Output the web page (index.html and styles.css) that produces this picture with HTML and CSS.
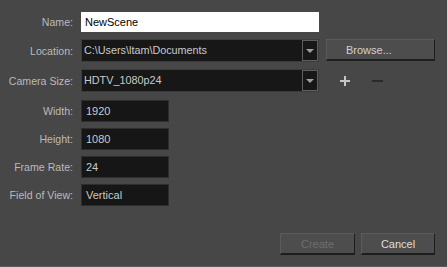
FILE: index.html
```html
<!DOCTYPE html>
<html>
<head>
<meta charset="utf-8">
<link rel="stylesheet" href="styles.css">
</head>
<body>
<div class="dialog">
  <div class="form">
    <div class="row r-name">
      <span class="label">Name:</span>
      <div class="text-input">NewScene</div>
    </div>
    <div class="row r-loc">
      <span class="label">Location:</span>
      <div class="combo">
        <span class="combo-text">C:\Users\ltam\Documents</span>
        <span class="combo-btn"><span class="arrow"></span></span>
      </div>
      <button class="btn btn-browse">Browse...</button>
    </div>
    <div class="row r-cam">
      <span class="label">Camera Size:</span>
      <div class="combo">
        <span class="combo-text">HDTV_1080p24</span>
        <span class="combo-btn"><span class="arrow"></span></span>
      </div>
      <span class="icon-btn plus">
        <svg width="10" height="10" viewBox="0 0 10 10"><rect x="0" y="4" width="10" height="2" fill="#c6c6c6"/><rect x="4" y="0" width="2" height="10" fill="#c6c6c6"/></svg>
      </span>
      <span class="icon-btn minus">
        <svg width="11" height="10" viewBox="0 0 11 10"><rect x="0" y="4" width="11" height="2" fill="#2a2a2a"/></svg>
      </span>
    </div>
    <div class="row r-field first">
      <span class="label">Width:</span>
      <div class="field">1920</div>
    </div>
    <div class="row r-field">
      <span class="label">Height:</span>
      <div class="field">1080</div>
    </div>
    <div class="row r-field">
      <span class="label">Frame Rate:</span>
      <div class="field">24</div>
    </div>
    <div class="row r-field">
      <span class="label">Field of View:</span>
      <div class="field">Vertical</div>
    </div>
  </div>
  <div class="footer">
    <button class="btn btn-create">Create</button>
    <button class="btn btn-cancel">Cancel</button>
  </div>
</div>
</body>
</html>
```

FILE: styles.css
```css
html, body {
  margin: 0;
  padding: 0;
  background: #474747;
}
body {
  width: 447px;
  height: 267px;
  overflow: hidden;
  font-family: "Liberation Sans", Arial, sans-serif;
  font-size: 11px;
}
.dialog {
  box-sizing: border-box;
  height: 267px;
  display: flex;
  flex-direction: column;
  padding-top: 12px;
  border-bottom: 1px solid #5c5c5c;
}
.form {
  display: flex;
  flex-direction: column;
}
.row {
  display: flex;
  align-items: center;
}
.label {
  width: 73px;
  margin-right: 8px;
  text-align: right;
  color: #bababa;
  white-space: nowrap;
  font-size: 10.6px;
}
.r-name { height: 20px; }
.text-input {
  box-sizing: border-box;
  width: 238px;
  height: 20px;
  background: #ffffff;
  color: #000;
  padding-left: 4px;
  line-height: 20px;
}
.r-loc, .r-cam {
  height: 23px;
  margin-top: 7px;
}
.combo {
  box-sizing: border-box;
  width: 238px;
  height: 23px;
  background: #171717;
  border: 1px solid #3c3c3c;
  display: flex;
  align-items: stretch;
}
.combo-text {
  flex: 1;
  color: #cacaca;
  padding-left: 2px;
  line-height: 21px;
  font-size: 10.8px;
}
.combo-btn {
  box-sizing: border-box;
  width: 16px;
  border: 1px solid #5e5e5e;
  display: flex;
  align-items: center;
  justify-content: center;
}
.arrow {
  width: 0;
  height: 0;
  border-left: 4px solid transparent;
  border-right: 4px solid transparent;
  border-top: 4px solid #a0a0a0;
}
.btn {
  box-sizing: border-box;
  height: 22px;
  background: #4d4d4d;
  border: 1px solid #5b5b5b;
  border-right-color: #1e1e1e;
  border-bottom: 2px solid #1e1e1e;
  font-family: "Liberation Sans", Arial, sans-serif;
  font-size: 11px;
  padding: 0;
  margin: 0;
}
.btn-browse {
  width: 109px;
  margin-left: 7px;
  text-align: left;
  padding-left: 19px;
  color: #d0d0d0;
  align-self: flex-start;
}
.icon-btn {
  display: flex;
  align-items: center;
}
.plus { margin-left: 21px; }
.minus { margin-left: 22px; }
.r-field {
  height: 22px;
  margin-top: 6px;
}
.r-field.first { margin-top: 8px; }
.field {
  box-sizing: border-box;
  width: 88px;
  height: 22px;
  background: #161616;
  border: 1px solid #2e2e2e;
  color: #cacaca;
  padding-left: 4px;
  line-height: 20px;
}
.footer {
  margin-top: auto;
  display: flex;
  justify-content: flex-end;
  gap: 6px;
  padding-right: 12px;
  padding-bottom: 11px;
}
.btn-create {
  width: 75px;
  color: #6e6e6e;
}
.btn-cancel {
  width: 74px;
  color: #dedede;
}
```
